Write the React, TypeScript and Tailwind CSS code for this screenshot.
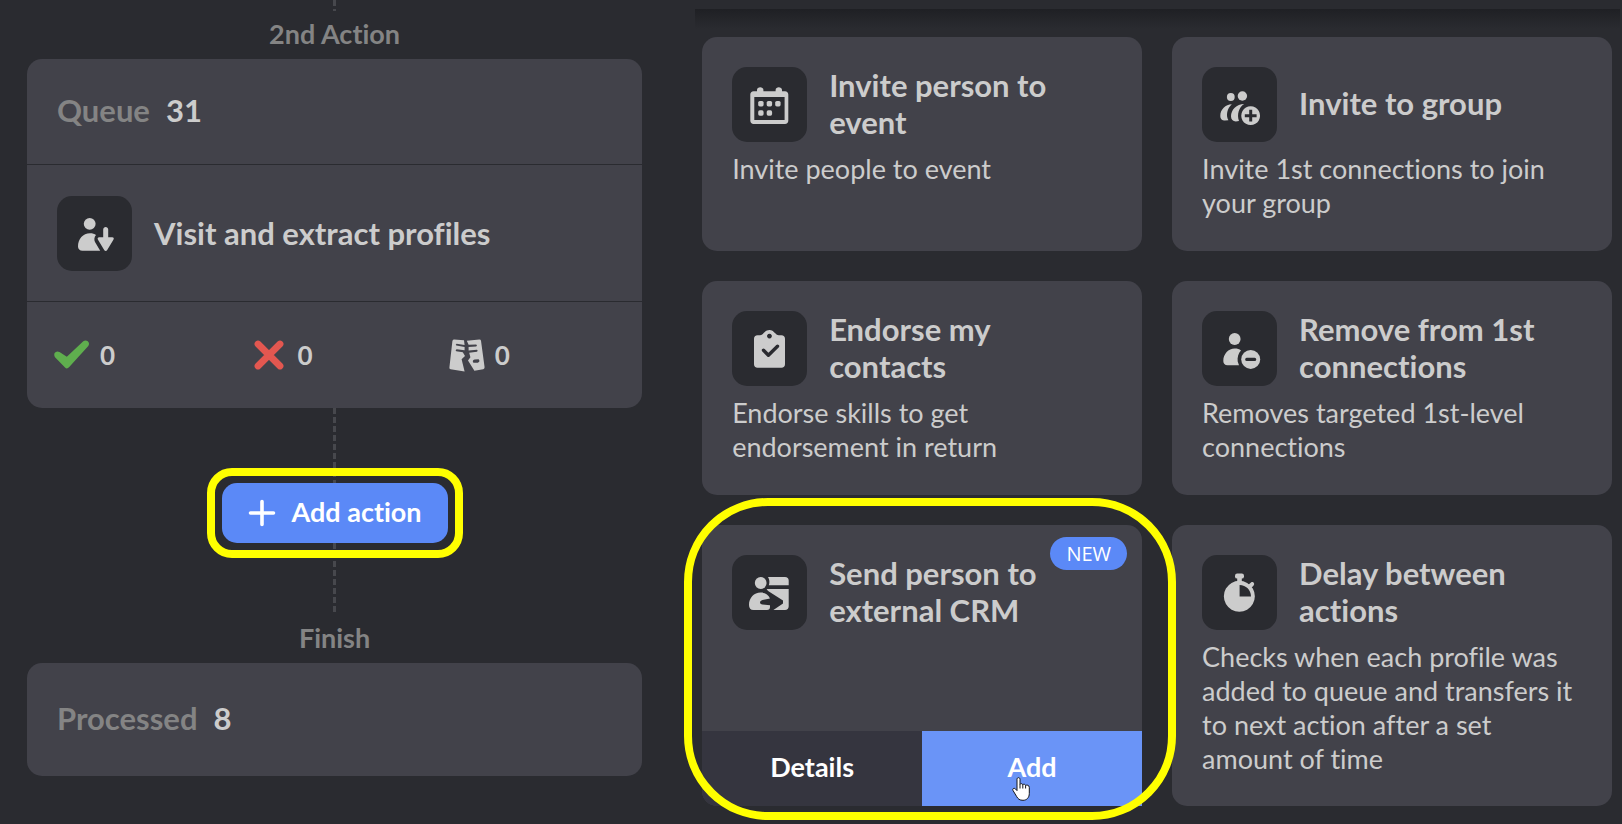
import type { ReactNode } from "react";

/* ICON TILE */
function IconTile({ children }: { children: ReactNode }) {
  return (
    <div className="h-[75px] w-[75px] shrink-0 rounded-[15px] bg-[#2a2b30]">
      <svg viewBox="0 0 75 75" className="h-full w-full" fill="#cccccc" aria-hidden="true">
        {children}
      </svg>
    </div>
  );
}

const visitIcon = (
  <>
    <circle cx="32.7" cy="27.8" r="5.9" />
    <path d="M21 50.5C21 43 26 37.3 33 37.3C35.5 37.3 37.6 37.9 39 38.9C37.2 40.9 36.9 43.6 38 46L43.2 54.7H25.5C22.8 54.7 21 53 21 50.5Z" />
    <path d="M46.2 33.5C46.2 30 51.2 30 51.2 33.5V41.3H55.2C56.8 41.3 57.2 42.6 56.4 43.8L50.2 54C49.5 55.2 47.9 55.2 47.2 54L41 43.8C40.2 42.6 40.8 41.3 42.2 41.3H46.2Z" />
  </>
);

const calendarIcon = (
  <>
    <path
      fillRule="evenodd"
      d="M25 24.3V23C25 19.2 31.4 19.2 31.4 23V24.3H43.6V23C43.6 19.2 50 19.2 50 23V24.3H53C55 24.3 56.3 25.6 56.3 27.6V53.6C56.3 55.6 55 57 53 57H21.6C19.6 57 18.3 55.6 18.3 53.6V27.6C18.3 25.6 19.6 24.3 21.6 24.3ZM22.3 30V53H52.6V30Z"
    />
    <rect x="26.2" y="34" width="5.4" height="5.4" rx="1.6" />
    <rect x="34.7" y="34" width="5.4" height="5.4" rx="1.6" />
    <rect x="43.2" y="34" width="5.4" height="5.4" rx="1.6" />
    <rect x="26.2" y="43.3" width="5.4" height="5.4" rx="1.6" />
    <rect x="34.7" y="43.3" width="5.4" height="5.4" rx="1.6" />
  </>
);

const groupIcon = (
  <>
    <circle cx="28.8" cy="30" r="3.9" />
    <circle cx="40.4" cy="29" r="4.7" />
    <path d="M29.8 37.3C23.5 37.6 18.3 42.5 18.3 48.8C18.3 52.4 20.2 53.6 23 53.6L26.4 53.2C23.6 48.6 25.2 41.3 29.8 37.3Z" />
    <path d="M42.2 37C34.5 37 29 42.8 29 49.3C29 52.8 31 54.4 33.8 54.4L37 54C34.6 47.5 37 40 42.2 37Z" />
    <path
      fillRule="evenodd"
      d="M48.7 39.3A9.4 9.4 0 1 1 48.6 39.3ZM47.2 42.8V47.2H42.8V50.2H47.2V54.6H50.2V50.2H54.6V47.2H50.2V42.8Z"
    />
  </>
);

const clipboardIcon = (
  <>
    <path
      fillRule="evenodd"
      d="M25.5 24.3H28C31.5 24.3 32.5 19 37.4 19C42.3 19 43.3 24.3 46.8 24.3H49.5C51.6 24.3 53 25.7 53 27.8V53.2C53 55.4 51.6 56.8 49.5 56.8H25.5C23.4 56.8 22 55.4 22 53.2V27.8C22 25.7 23.4 24.3 25.5 24.3ZM37.4 22.7A2.4 2.4 0 1 0 37.5 22.7Z"
    />
    <path
      d="M31.5 39.2L36.4 44.2L45.5 35.3"
      fill="none"
      stroke="#2a2b30"
      strokeWidth="3.4"
      strokeLinecap="round"
      strokeLinejoin="round"
    />
  </>
);

const removeIcon = (
  <>
    <circle cx="32.7" cy="28" r="5.9" />
    <path d="M21.3 50C21.3 43 26.5 37.6 32.7 37.6C35.3 37.6 37.4 38.2 39 39.4C36.3 42 35.2 46.5 35.7 50.5L37 54.2H25.5C22.9 54.2 21.3 52.6 21.3 50Z" />
    <circle cx="48.7" cy="48.4" r="9.5" />
    <rect x="43.2" y="46.8" width="11" height="3.2" rx="1.5" fill="#2a2b30" />
  </>
);

const crmIcon = (
  <>
    <circle cx="28.7" cy="28" r="5.9" />
    <path d="M36 22H53C55.3 22 56.7 23.4 56.7 25.6V30.3H36.8C37.8 27.5 37.6 24.6 36 22Z" />
    <path d="M34.6 34H56.7V51.2C56.7 53.6 55.3 55 53 55H41.4L51 48.5V45.6L36.5 36.3C35.8 35.6 35 35 34.6 34Z" />
    <path d="M17 50C17 43 22 37.6 28.6 37.6C33 37.6 36.6 39.8 38 43.5L30.5 45C27.2 45.8 27.2 49.2 30.5 49.6L38 50.2V52C38 54 37 55 35 55H21.5C18.6 55 17 53 17 50Z" />
  </>
);

const stopwatchIcon = (
  <>
    <rect x="33" y="18.6" width="9" height="5" rx="2.2" />
    <path d="M35.2 22H39.8V28H35.2Z" />
    <path d="M45.5 30.5L49 27.4C51 26 53.2 28.6 51.6 30.4L48.5 33.8Z" />
    <path
      fillRule="evenodd"
      d="M37.4 25.8A15.5 15.5 0 1 1 37.3 25.8ZM37.6 30V41.4H49C49 35 43.9 30 37.6 30Z"
    />
  </>
);

const actions = [
  { title: "Invite person to event", text: "Invite people to event", icon: calendarIcon },
  { title: "Invite to group", text: "Invite 1st connections to join your group", icon: groupIcon },
  { title: "Endorse my contacts", text: "Endorse skills to get endorsement in return", icon: clipboardIcon },
  { title: "Remove from 1st connections", text: "Removes targeted 1st-level connections", icon: removeIcon },
  { title: "Send person to external CRM", icon: crmIcon, active: true },
  {
    title: "Delay between actions",
    text: "Checks when each profile was added to queue and transfers it to next action after a set amount of time",
    icon: stopwatchIcon,
  },
];

/* DASHED CONNECTOR */
function Connector({ className }: { className: string }) {
  return (
    <div
      className={`w-[3px] bg-[repeating-linear-gradient(to_bottom,#47484d_0_6px,transparent_6px_9px)] ${className}`}
    ></div>
  );
}

function HandCursor() {
  return (
    <svg
      viewBox="0 0 18 24"
      className="pointer-events-none absolute top-[46px] left-[41%] h-6 w-[18px]"
      fill="#ffffff"
      stroke="#15161a"
      strokeWidth="1"
      strokeLinejoin="round"
      aria-hidden="true"
    >
      <path d="M5 2.3C5 .1 8 .1 8 2.3V7.5C8.6 6.2 10.6 6.5 10.8 7.8C11.6 6.8 13.4 7.2 13.6 8.5C14.8 7.7 17.3 8 17.3 10.5V16.5C17.3 20.5 14.8 23.3 11 23.3C7.5 23.3 6 22 4.5 19.3L1 13.5C0 11.7 2 10.6 3.3 11.8L5 13.6Z" />
      <path d="M8 7.5V11.5M10.8 7.8V11.5M13.6 8.5V11.5" fill="none" />
    </svg>
  );
}

function ActionCard({ title, text, icon, active }: (typeof actions)[number]) {
  return (
    <article className="relative flex min-h-[214px] flex-col rounded-[15px] bg-[#42424a]">
      <div className="px-[30px] pt-[30px]">
        <div className="flex h-[75px] items-center gap-[22px]">
          <IconTile>{icon}</IconTile>
          <h3 className="max-w-[260px] pb-[2px] text-[31px] leading-[37px] font-bold">{title}</h3>
        </div>
        {text && <p className="mt-[10px] pb-[30px] text-[27px] leading-[34px]">{text}</p>}
      </div>

      {active && (
        <>
          <div className="mt-auto grid grid-cols-2 text-[27px] font-bold text-white">
            <button className="h-[75px] rounded-bl-[15px] bg-[#35353f] pb-[2px]">Details</button>
            <button className="relative h-[75px] bg-[#6a94f7] pb-[2px]">
              Add
              <HandCursor />
            </button>
          </div>

          {/* BADGE */}
          <span className="absolute top-3 right-[15px] rounded-full bg-[#5b89f7] px-4 font-['Open_Sans',sans-serif] text-[20px] leading-[33px] text-white">
            NEW
          </span>

          {/* HIGHLIGHT */}
          <div className="pointer-events-none absolute -top-[27px] -right-[34px] -bottom-[14px] -left-[18px] z-10 rounded-[84px] border-8 border-[#ffff00]"></div>
        </>
      )}
    </article>
  );
}

export default function App() {
  return (
    <main className="grid min-h-screen grid-cols-[3fr_4fr] bg-[#2a2b30] font-[Lato,sans-serif] text-[#cccccc] [font-variant-ligatures:none]">

      {/* WORKFLOW */}
      <section className="flex flex-col items-center pr-[53px] pl-[27px]">
        <Connector className="h-[11px]" />
        <h2 className="pb-[2px] text-[27px] leading-[46px] font-bold text-[#848484]">2nd Action</h2>

        <div className="w-full rounded-[15px] bg-[#42424a]">
          <div className="flex h-[105px] items-center gap-4 px-[30px] pb-[2px] text-[31px] font-bold">
            <span className="text-[#848484]">Queue</span>
            <span>31</span>
          </div>

          <div className="flex h-[138px] items-center gap-[22px] border-y border-[#2a2b30] px-[30px]">
            <IconTile>{visitIcon}</IconTile>
            <h3 className="text-[31px] leading-[37px] font-bold">Visit and extract profiles</h3>
          </div>

          <div className="grid h-[106px] grid-cols-3 items-center gap-1 pl-[27px] text-[26px] font-bold">
            <div className="flex items-center gap-[10px]">
              <svg viewBox="0 0 36 30" className="h-[30px] w-9" fill="#5fae4e" aria-hidden="true">
                <path d="M1 17.2L11 27.5Q13 29.5 15 27.3L34.3 6Q36 3.2 33.8 1.2Q31.5-.4 29.3 1.3L12.8 16.8L5.5 12Q2.5 10.5.6 13Q-.3 15.3 1 17.2Z" />
              </svg>
              <span>0</span>
            </div>
            <div className="flex items-center gap-[10px]">
              <svg
                viewBox="0 0 36 30"
                className="h-[30px] w-9"
                stroke="#e35750"
                strokeWidth="6.8"
                strokeLinecap="round"
                aria-hidden="true"
              >
                <path d="M7 4L29 26M29 4L7 26" />
              </svg>
              <span>0</span>
            </div>
            <div className="flex items-center gap-[10px]">
              <svg viewBox="0 0 36 33" className="h-[33px] w-9" fill="#cccccc" aria-hidden="true">
                <path d="M5.2.6L15 1.2L15.6 6L7.6 4.7Q6 5.5 7.4 6.6L15.6 8V11.3L7.6 10.2Q5.8 11 7.2 12.2L13.8 13.2L16 17L12.6 20.3L15.6 32.4L1.6 30.3Q.2 29.8.4 28.4L3.4 2Q3.8.6 5.2.6Z" />
                <path
                  fillRule="evenodd"
                  d="M17.8 1.8L30.4.4Q31.8.4 32 1.8L35.6 28.2Q35.6 29.8 34.2 30.2L25.4 31.8L19 21.4L21.4 18.2L20.2 13.8L28 12.8Q29.4 11.8 28 10.8L19.6 11.4V8L27.2 7.4Q28.8 6.4 27.2 5.4L19.6 5.8ZM25.6 20.6Q22.8 21.6 24.4 23.8H28.8Q31.6 22.4 29.6 20.2Z"
                />
              </svg>
              <span>0</span>
            </div>
          </div>
        </div>

        <Connector className="h-[75px]" />
        <div className="relative">
          <button className="flex h-[60px] items-center gap-4 rounded-[15px] bg-[#5b89f7] px-[26px] text-[27px] font-bold text-white">
            <svg
              viewBox="0 0 28 28"
              className="h-7 w-7"
              stroke="currentColor"
              strokeWidth="3.6"
              strokeLinecap="round"
              aria-hidden="true"
            >
              <path d="M14 2.5V25.5M2.5 14H25.5" />
            </svg>
            <span className="pb-[2px]">Add action</span>
          </button>
          <div className="pointer-events-none absolute -inset-[15px] rounded-[25px] border-8 border-[#ffff00]"></div>
        </div>
        <Connector className="h-[72px]" />

        <h2 className="pb-[2px] text-[27px] leading-[46px] font-bold text-[#848484]">Finish</h2>
        <div className="flex h-[113px] w-full items-center gap-4 rounded-[15px] bg-[#42424a] px-[30px] pb-[2px] text-[31px] font-bold">
          <span className="text-[#848484]">Processed</span>
          <span>8</span>
        </div>
      </section>

      {/* ACTION LIBRARY */}
      <section className="pt-[9px]">
        <div className="mr-[2px] h-7 bg-linear-to-b from-[#1f2024] to-[#2a2b30] to-70%"></div>
        <div className="grid grid-cols-2 gap-[30px] pr-[10px] pl-[7px]">
          {actions.map((action) => (
            <ActionCard key={action.title} {...action} />
          ))}
        </div>
      </section>

    </main>
  );
}
